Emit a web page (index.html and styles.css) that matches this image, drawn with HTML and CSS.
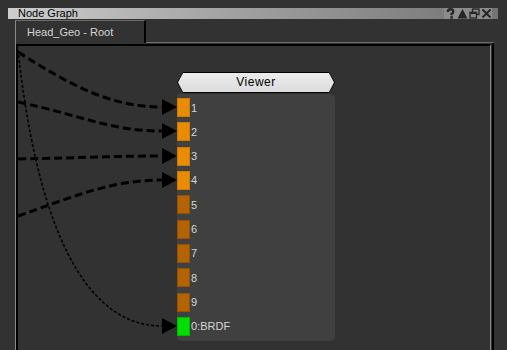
FILE: index.html
```html
<!DOCTYPE html>
<html lang="en">
<head>
  <meta charset="UTF-8" />
  <title>Node Graph</title>
  <link rel="stylesheet" href="styles.css">
</head>
<body>
  <div class="window">
    <div class="titlebar">
      <span class="title">Node Graph</span>
      <div class="title-icons">
        <span class="ticon">
          <svg viewBox="0 0 11 11"><path d="M2.8 4 Q2.8 1.2 5.5 1.2 Q8.3 1.2 8.3 3.5 Q8.3 5.1 6.6 5.8 L6.6 7.2" fill="none" stroke="#262626" stroke-width="2.4"/><rect x="5.3" y="8.2" width="2.6" height="2.4" fill="#262626"/></svg>
        </span>
        <span class="ticon">
          <svg viewBox="0 0 11 11"><polygon points="5.5,1 10.5,10.5 0.5,10.5" fill="#262626"/></svg>
        </span>
        <span class="ticon">
          <svg viewBox="0 0 11 11"><rect x="3.5" y="1" width="6.5" height="5.5" fill="none" stroke="#262626" stroke-width="1.3"/><rect x="1" y="4.3" width="6.5" height="5.7" fill="#8c8c8c" stroke="#262626" stroke-width="1.3"/><line x1="1" y1="5.2" x2="7.5" y2="5.2" stroke="#262626" stroke-width="1.6"/></svg>
        </span>
        <span class="ticon">
          <svg viewBox="0 0 11 11"><path d="M1.5 1.5 L9.5 9.5 M9.5 1.5 L1.5 9.5" stroke="#262626" stroke-width="2"/></svg>
        </span>
      </div>
    </div>

    <div class="tabrow">
      <div class="tab">Head_Geo - Root</div>
      <div class="tab-rest"></div>
    </div>

    <div class="pane">
      <div class="canvas">
        <!-- connections -->
        <svg class="edges" width="474" height="304" viewBox="18 46 474 304">
          <g fill="none" stroke="#000">
            <path d="M18,52 C70,85 110,107 162,107" stroke-width="3" stroke-dasharray="8 4"/>
            <path d="M18,102 C80,115 110,131 162,131" stroke-width="3" stroke-dasharray="8 4"/>
            <path d="M18,159 C80,158 110,156 162,156" stroke-width="3" stroke-dasharray="8 4"/>
            <path d="M18,216 C70,198 110,180 162,180" stroke-width="3" stroke-dasharray="8 4"/>
            <path d="M18,50 C36,215 80,326 162,326" stroke-width="1.6" stroke-dasharray="3 2"/>
          </g>
          <g fill="#000">
            <polygon points="162,99 177,107 162,115"/>
            <polygon points="162,123 177,131 162,139"/>
            <polygon points="162,148 177,156 162,164"/>
            <polygon points="162,172 177,180 162,188"/>
            <polygon points="162,318 177,326 162,334"/>
          </g>
        </svg>

        <div class="node">
          <div class="node-head">
            <div class="node-head-inner">Viewer</div>
          </div>
          <div class="node-body">
            <div class="port-row"><span class="port live"></span><span class="port-label">1</span></div>
            <div class="port-row"><span class="port live"></span><span class="port-label">2</span></div>
            <div class="port-row"><span class="port live"></span><span class="port-label">3</span></div>
            <div class="port-row"><span class="port live"></span><span class="port-label">4</span></div>
            <div class="port-row"><span class="port"></span><span class="port-label">5</span></div>
            <div class="port-row"><span class="port"></span><span class="port-label">6</span></div>
            <div class="port-row"><span class="port"></span><span class="port-label">7</span></div>
            <div class="port-row"><span class="port"></span><span class="port-label">8</span></div>
            <div class="port-row"><span class="port"></span><span class="port-label">9</span></div>
            <div class="port-row"><span class="port brdf"></span><span class="port-label">0:BRDF</span></div>
          </div>
        </div>
      </div>
    </div>
  </div>
</body>
</html>
```

FILE: styles.css
```css
:root {
  --bg: #323232;
  --node-bg: #404040;
  --edge-light: #8a8a8a;
  --label: #d6d6d6;
}

body {
  margin: 0;
  background-color: var(--bg);
  font-family: 'Liberation Sans', Arial, sans-serif;
  width: 507px;
  height: 350px;
  overflow: hidden;
}

.window {
  padding: 8px 9px 0 8px;
}

.titlebar {
  height: 11px;
  display: flex;
  align-items: center;
  background: linear-gradient(to right, #cdcdcd, #a2a2a2 45%, #747474);
  color: #000;
  font-size: 11px;
  line-height: 11px;
}

.title {
  padding-left: 10px;
  flex: 1;
}

.title-icons {
  display: flex;
  height: 11px;
  margin-right: 6px;
  background-color: #888;
}

.ticon {
  width: 12px;
  height: 11px;
  display: flex;
  align-items: center;
  justify-content: center;
  background-color: #8c8c8c;
}

.ticon svg {
  width: 11px;
  height: 11px;
}

.tabrow {
  display: flex;
  margin: 1px 4px 0 7px;
  height: 23px;
}

.tab {
  width: 117px;
  padding-left: 11px;
  border-top: 1px solid #6a6a6a;
  border-left: 1px solid var(--edge-light);
  border-right: 2px solid #000;
  color: var(--label);
  font-size: 11px;
  line-height: 22px;
}

.tab-rest {
  flex: 1;
  border-bottom: 1px solid #6e6e6e;
}

.pane {
  margin: 0 4px 0 7px;
  padding-top: 1px;
  border-left: 1px solid var(--edge-light);
  border-right: 2px solid #000;
}

.canvas {
  position: relative;
  height: 304px;
  margin-right: 1px;
  border-top: 2px solid #000;
  border-left: 2px solid #000;
  border-right: 1px solid var(--edge-light);
}

.edges {
  position: absolute;
  left: 0;
  top: 0;
}

.node {
  position: absolute;
  left: 159px;
  top: 26px;
  width: 158px;
}

.node-head {
  height: 21px;
  background-color: #000;
  clip-path: polygon(6px 0, calc(100% - 6px) 0, 100% 50%, calc(100% - 6px) 100%, 6px 100%, 0 50%);
  padding: 1px 0;
  box-sizing: border-box;
}

.node-head-inner {
  height: 19px;
  margin: 0 1px;
  background: linear-gradient(#ececec, #dcdcdc);
  clip-path: polygon(5px 0, calc(100% - 5px) 0, 100% 50%, calc(100% - 5px) 100%, 5px 100%, 0 50%);
  text-align: center;
  font-size: 12px;
  line-height: 19px;
  letter-spacing: 0.5px;
  color: #000;
}

.node-body {
  margin-top: 1px;
  padding: 4px 0 5px 0;
  background-color: var(--node-bg);
  border-radius: 0 5px 5px 5px;
  display: flex;
  flex-direction: column;
  gap: 5.33px;
}

.port-row {
  display: flex;
  align-items: center;
  height: 19px;
}

.port {
  width: 11px;
  height: 17px;
  background-color: #b36300;
  border: 1px solid #935000;
}

.port.live {
  background-color: #e98c00;
  border-color: #d07a00;
}

.port.brdf {
  background-color: #00e000;
  border-color: #00b800;
}

.port-label {
  padding-left: 1px;
  color: var(--label);
  font-size: 11px;
}
```
